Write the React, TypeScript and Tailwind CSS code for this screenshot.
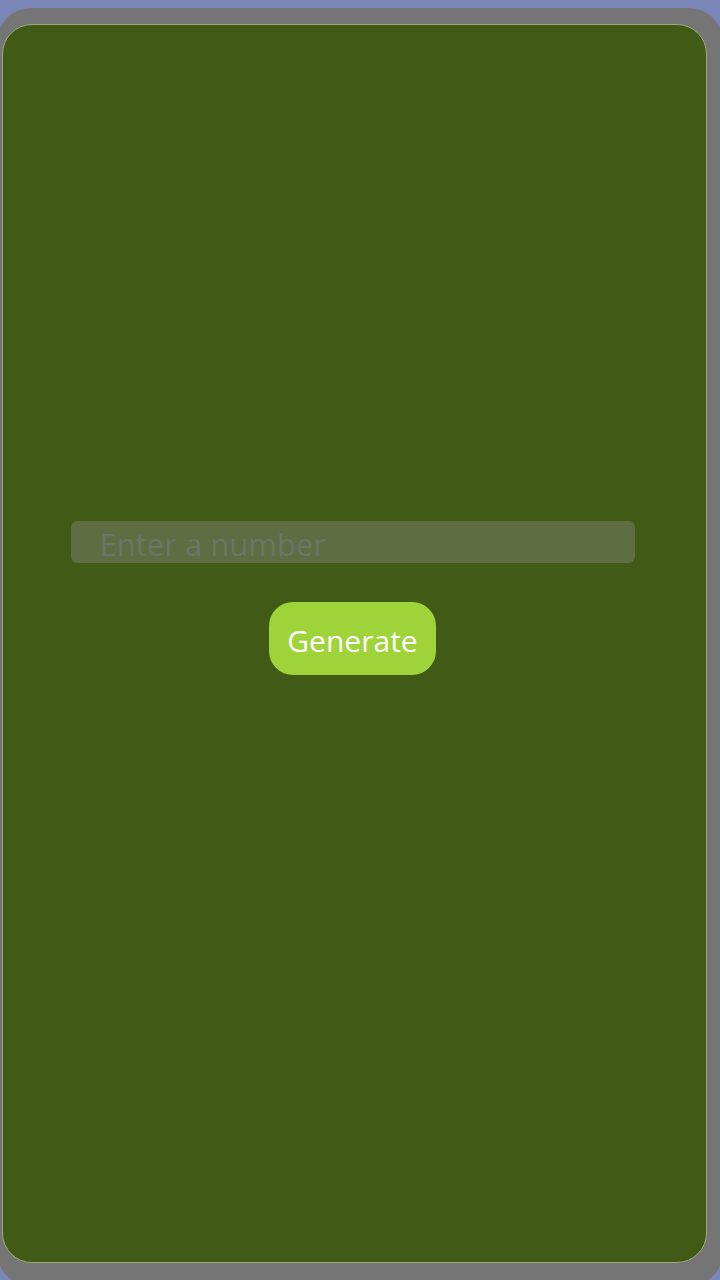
export default function App() {
  return (
    <div className="h-[1280px] w-[720px] overflow-hidden bg-[#7b86b8] pt-2" style={{ fontFamily: '"Open Sans", "Noto Sans", sans-serif' }}>
      <div className="ml-[-3px] h-[1278px] w-[726px] rounded-[34px] bg-[#757575] pb-[20px] pl-[5px] pr-[16px] pt-[16px]">
        <div className="flex h-[1239px] flex-col items-center rounded-[30px] border border-[#9aab78] bg-[#415a15] pr-[4px] pt-[496px]">
          <input
            type="text"
            placeholder="Enter a number"
            className="h-[42px] w-[564px] rounded-[6px] bg-[#5f6d42] px-[29px] pt-[4px] text-[31px] text-white outline-none placeholder:text-[#6e7468]"
          />
          <button className="mt-[39px] h-[73px] w-[167px] rounded-[24px] bg-[#9ed43a] pt-[4px] text-[30px] font-medium text-white">
            Generate
          </button>
        </div>
      </div>
    </div>
  );
}
